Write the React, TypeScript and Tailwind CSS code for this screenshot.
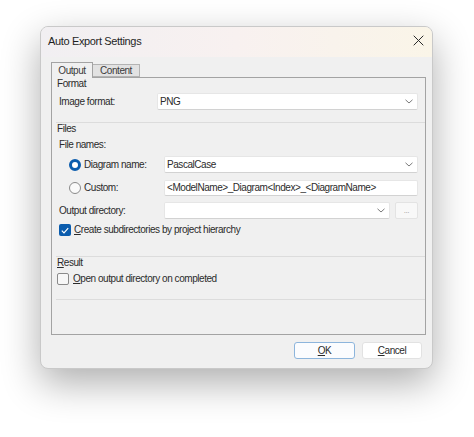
import React from "react";

const font = { fontFamily: '"Liberation Sans", Arial, sans-serif' };

function Chevron() {
  return (
    <svg width="8" height="5" viewBox="0 0 8 5" className="shrink-0">
      <path d="M0.5 0.8 L4 4 L7.5 0.8" fill="none" stroke="#7a7a7a" strokeWidth="1" />
    </svg>
  );
}

function Select({ value, className }: { value: string; className: string }) {
  return (
    <div
      className={
        "flex items-center justify-between bg-white border border-[#e6e6e6] border-b-[#d2d2d2] rounded-[2px] pl-[2px] pr-[4px] " +
        className
      }
    >
      <span>{value}</span>
      <Chevron />
    </div>
  );
}

export default function App() {
  return (
    <div
      className="w-[474px] h-[437px] bg-white pt-[26px] pl-[40px] text-[10px] tracking-[-0.45px] text-[#2b2b2b] leading-[12px]"
      style={font}
    >
      <div className="w-[393px] h-[343px] rounded-[8px] border border-[#c9c9c9] bg-[#f0f0f0] shadow-[0_14px_38px_rgba(0,0,0,0.32)] overflow-hidden flex flex-col">
        {/* Title bar */}
        <div className="h-[30px] shrink-0 flex items-center justify-between pl-[7px] pr-[8px] bg-gradient-to-r from-[#f1eff2] via-[#f8f1f0] to-[#faf5e8]">
          <span className="text-[11px] tracking-[-0.35px] text-[#1f1f1f] mt-[-3px]">Auto Export Settings</span>
          <svg width="11" height="11" viewBox="0 0 11 11" className="mt-[-3px]">
            <path d="M0.7 0.7 L10.3 10.3 M10.3 0.7 L0.7 10.3" stroke="#2a2a2a" strokeWidth="1" />
          </svg>
        </div>

        {/* Body */}
        <div className="flex flex-col px-[10px] pt-[5px]">
          {/* Tabs */}
          <div className="flex items-end h-[15px] relative z-10">
            <div className="w-[42px] h-[16px] -mb-px border border-[#a3a3a3] border-b-0 bg-[#f0f0f0] flex items-center justify-center text-[#3a3a3a]">
              Output
            </div>
            <div className="w-[47px] h-[13px] border border-l-0 border-[#b3b3b3] bg-[#e2e2e2] flex items-center justify-center text-[#3a3a3a]">
              Content
            </div>
          </div>

          {/* Panel */}
          <div className="w-[375px] h-[258px] border border-[#a3a3a3] bg-[#f0f0f0] flex flex-col">
            {/* Format */}
            <div className="flex flex-col">
              <div className="h-[12px] pl-[5px]">Format</div>
              <div className="mt-[3px] h-[17px] flex items-center pl-[7px] pr-[7px]">
                <span className="w-[98px]">Image format:</span>
                <Select value="PNG" className="h-[17px] flex-1" />
              </div>
            </div>

            {/* Files */}
            <div className="mt-[12px] ml-[4px] border-t border-[#dcdcdc] flex flex-col">
              <div className="h-[12px] pl-[1px]">Files</div>
              <div className="mt-[4px] h-[12px] pl-[3px]">File names:</div>
              <div className="mt-[5px] h-[17px] flex items-center pr-[7px]">
                <span className="ml-[13px] w-[12px] h-[12px] rounded-full border-[3.5px] border-[#0b5cad] bg-white shrink-0" />
                <span className="ml-[3px] w-[80px]">Diagram name:</span>
                <Select value="PascalCase" className="h-[17px] flex-1" />
              </div>
              <div className="mt-[7px] h-[16px] flex items-center pr-[7px]">
                <span className="ml-[13px] w-[12px] h-[12px] rounded-full border border-[#8a8a8a] bg-[#fafafa] shrink-0" />
                <span className="ml-[3px] w-[80px]">Custom:</span>
                <div className="h-[16px] flex-1 flex items-center bg-white border border-[#e6e6e6] border-b-[#d2d2d2] rounded-[2px] pl-[2px]">
                  &lt;ModelName&gt;_Diagram&lt;Index&gt;_&lt;DiagramName&gt;
                </div>
              </div>
              <div className="mt-[6px] h-[17px] flex items-center pr-[7px]">
                <span className="ml-[3px] w-[105px]">Output directory:</span>
                <Select value="" className="h-[17px] flex-1" />
                <div className="ml-[5px] w-[23px] h-[17px] bg-[#f8f8f8] border border-[#e3e3e3] rounded-[2px] flex items-center justify-center text-[#9a9a9a] text-[8px] leading-[8px]">
                  ...
                </div>
              </div>
              <div className="mt-[5px] h-[12px] flex items-center">
                <span className="ml-[3px] w-[12px] h-[12px] rounded-[2px] bg-[#0b5cad] flex items-center justify-center shrink-0">
                  <svg width="8" height="7" viewBox="0 0 8 7">
                    <path d="M0.8 3.6 L3 5.8 L7.2 1.2" fill="none" stroke="white" strokeWidth="1.2" />
                  </svg>
                </span>
                <span className="ml-[3px]">
                  <span className="underline underline-offset-[1px]">C</span>reate subdirectories by project hierarchy
                </span>
              </div>
            </div>

            {/* Result */}
            <div className="mt-[20px] ml-[4px] border-t border-[#dcdcdc] flex flex-col">
              <div className="h-[12px] pl-[1px]">
                <span className="underline underline-offset-[1px]">R</span>esult
              </div>
              <div className="mt-[4px] h-[12px] flex items-center">
                <span className="ml-[1px] w-[12px] h-[12px] rounded-[2px] border border-[#8a8a8a] bg-[#f7f7f7] shrink-0" />
                <span className="ml-[4px]">
                  <span className="underline underline-offset-[1px]">O</span>pen output directory on completed
                </span>
              </div>
              <div className="mt-[14px] border-t border-[#dcdcdc]" />
            </div>
          </div>

          {/* Buttons */}
          <div className="flex justify-end gap-[7px] pt-[7px]">
            <div className="w-[61px] h-[17px] rounded-[3px] border border-[#8db5dc] bg-[#fbfcfe] flex items-center justify-center">
              <span>
                <span className="underline underline-offset-[1px]">O</span>K
              </span>
            </div>
            <div className="w-[60px] h-[17px] rounded-[3px] border border-[#e2e2e2] bg-white flex items-center justify-center">
              <span>
                <span className="underline underline-offset-[1px]">C</span>ancel
              </span>
            </div>
          </div>
        </div>
      </div>
    </div>
  );
}
